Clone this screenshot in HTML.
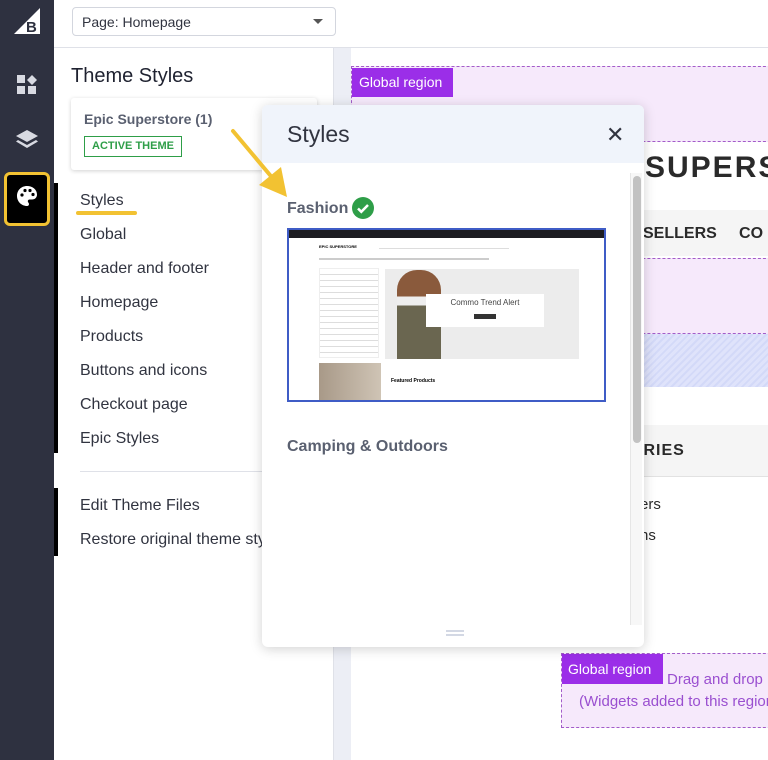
<!DOCTYPE html>
<html><head><meta charset="utf-8">
<style>
*{box-sizing:border-box;margin:0;padding:0}
body{width:768px;height:760px;overflow:hidden;position:relative;font-family:"Liberation Sans",sans-serif;background:#fff}
.a{position:absolute}
.side{left:0;top:0;width:54px;height:760px;background:#2e3140}
.menu div{position:absolute;left:80px;font-size:16px;color:#313440}
.cv{left:334px;top:48px;width:434px;height:712px;background:#eceef5}
.dash{border:1px dashed #a35cc9}
.gr{white-space:nowrap;background:#9b2ee8;color:#fff;font-size:14px}
</style></head><body>
<div class="a side"></div>
<svg class="a" style="left:14px;top:8px" width="26" height="26" viewBox="0 0 26 26"><polygon points="26,0 26,26 0,26" fill="#fff"/><text x="12" y="24" font-size="15" font-weight="bold" fill="#2e3140" font-family="Liberation Sans">B</text></svg>
<svg class="a" style="left:17px;top:75px" width="20" height="20" viewBox="0 0 20 20" fill="#d8dae2"><rect x="0" y="0" width="8" height="8"/><rect x="0" y="11" width="8" height="8"/><rect x="11" y="11" width="8" height="8"/><polygon points="15,0 20,5 15,10 10,5"/></svg>
<svg class="a" style="left:16px;top:130px" width="22" height="20" viewBox="0 0 22 20" fill="#d8dae2"><polygon points="11,0 22,6 11,12 0,6"/><polygon points="2,10 11,15 20,10 22,11.5 11,18 0,11.5"/></svg>
<div class="a" style="left:4px;top:172px;width:46px;height:54px;background:#000;border:3px solid #f2c232;border-radius:6px"></div>
<svg class="a" style="left:16px;top:185px" width="22" height="22" viewBox="0 0 22 22"><path d="M11 1C5 1 1 5.5 1 11s4.5 10 10 10c1.5 0 2-1 2-2 0-1.3-1.2-1.6-1.2-2.8 0-1 .8-1.7 1.8-1.7H16c3 0 5-2 5-5C21 4.5 16.5 1 11 1z" fill="#fff"/><circle cx="6" cy="10" r="1.6" fill="#000"/><circle cx="9" cy="5.5" r="1.6" fill="#000"/><circle cx="14" cy="5.5" r="1.6" fill="#000"/><circle cx="17" cy="9.5" r="1.6" fill="#000"/></svg>
<div class="a" style="left:54px;top:183px;width:4px;height:270px;background:#000"></div>
<div class="a" style="left:54px;top:488px;width:4px;height:68px;background:#000"></div>
<div class="a" style="left:54px;top:0;width:714px;height:48px;background:#fff;border-bottom:1px solid #dfe1e8"></div>
<div class="a" style="left:72px;top:7px;width:264px;height:29px;border:1px solid #d3d6de;border-radius:4px;font-size:14px;color:#313440;padding:6px 9px">Page: Homepage</div>
<div class="a" style="left:313px;top:19px;width:0;height:0;border-left:5px solid transparent;border-right:5px solid transparent;border-top:5px solid #555"></div>
<div class="a cv"></div>
<div class="a" style="left:351px;top:48px;width:417px;height:712px;background:#fff"></div>
<div class="a dash" style="left:351px;top:66px;width:430px;height:76px;background:#f6e9fb"></div>
<div class="a gr" style="left:352px;top:68px;width:101px;height:29px;padding:6px 7px">Global region</div>
<div class="a" style="left:645px;top:151px;font-size:30px;font-weight:bold;color:#2a2a2a;letter-spacing:2px">SUPERS</div>
<div class="a" style="left:351px;top:210px;width:417px;height:46px;background:#f5f5f5"></div>
<div class="a" style="left:643px;top:225px;font-size:16px;font-weight:bold;color:#2a2a2a;white-space:nowrap">SELLERS&nbsp;&nbsp;&nbsp;&nbsp;&nbsp;CO</div>
<div class="a dash" style="left:351px;top:258px;width:430px;height:76px;background:#f6e9fb"></div>
<div class="a" style="left:351px;top:334px;width:417px;height:53px;background:repeating-linear-gradient(135deg,#dfe3fb 0 3px,#d3d9f8 3px 5px)"></div>
<div class="a" style="left:351px;top:425px;width:417px;height:52px;background:#f5f5f5;border-bottom:1px solid #e2e2e2"></div>
<div class="a" style="left:630px;top:442px;font-size:16px;font-weight:bold;color:#2a2a2a;letter-spacing:1px">ORIES</div>
<div class="a" style="left:640px;top:496px;font-size:15px;color:#2a2a2a">ers</div>
<div class="a" style="left:640px;top:527px;font-size:15px;color:#2a2a2a">ns</div>
<div class="a dash" style="left:561px;top:653px;width:220px;height:75px;background:#f6e9fb"></div>
<div class="a gr" style="left:562px;top:654px;width:101px;height:30px;padding:7px 6px">Global region</div>
<div class="a" style="left:667px;top:671px;font-size:15px;color:#9a4fd0;white-space:nowrap">Drag and drop</div>
<div class="a" style="left:579px;top:693px;font-size:15px;color:#9a4fd0;white-space:nowrap">(Widgets added to this region</div>
<div class="a" style="left:333px;top:48px;width:1px;height:712px;background:#dfe1e8"></div>
<div class="a" style="left:71px;top:65px;font-size:20px;color:#1f2230">Theme Styles</div>
<div class="a" style="left:71px;top:98px;width:246px;height:72px;background:#fff;border-radius:3px;box-shadow:0 1px 4px rgba(0,0,0,.18)"></div>
<div class="a" style="left:84px;top:111px;font-size:14px;font-weight:bold;color:#5a6070">Epic Superstore (1)</div>
<div class="a" style="left:84px;top:136px;width:98px;height:21px;border:1px solid #2e9e48;color:#2e9e48;font-size:11px;font-weight:bold;text-align:center;line-height:19px;white-space:nowrap">ACTIVE THEME</div>
<div class="menu">
<div style="top:192px">Styles</div><div style="top:226px">Global</div><div style="top:260px">Header and footer</div><div style="top:294px">Homepage</div><div style="top:328px">Products</div><div style="top:362px">Buttons and icons</div><div style="top:396px">Checkout page</div><div style="top:430px">Epic Styles</div><div style="top:497px">Edit Theme Files</div><div style="top:531px;white-space:nowrap">Restore original theme styles</div>
</div>
<div class="a" style="left:80px;top:471px;width:190px;height:1px;background:#dfe1e8"></div>
<div class="a" style="left:76px;top:211px;width:61px;height:4px;background:#f2c232;border-radius:2px"></div>
<div class="a" style="left:262px;top:105px;width:382px;height:542px;background:#fff;border-radius:6px;box-shadow:0 2px 12px rgba(0,0,0,.18);overflow:hidden">
 <div class="a" style="left:0;top:0;width:382px;height:58px;background:#f0f4fb"></div>
 <div class="a" style="left:25px;top:16px;font-size:23px;color:#313440">Styles</div>
 <div class="a" style="left:344px;top:17px;font-size:22px;color:#313440">✕</div>
 <div class="a" style="left:368px;top:68px;width:12px;height:452px;background:#f7f7f7;border-left:1px solid #e6e6e6"></div>
 <div class="a" style="left:371px;top:71px;width:8px;height:267px;background:#c2c2c2;border-radius:4px"></div>
 <div class="a" style="left:25px;top:95px;font-size:16px;font-weight:bold;color:#5a6070">Fashion</div>
 <svg class="a" style="left:90px;top:92px" width="22" height="22" viewBox="0 0 22 22"><circle cx="11" cy="11" r="11" fill="#2e9e48"/><path d="M6 11.5l3.3 3.3L16 8" stroke="#fff" stroke-width="2.5" fill="none"/></svg>
 <div class="a" style="left:25px;top:123px;width:319px;height:174px;border:2px solid #3f5cc6;background:#fff;overflow:hidden">
  <div class="a" style="left:0;top:0;width:315px;height:8px;background:#1d1d22"></div>
  <div class="a" style="left:30px;top:14px;font-size:4px;font-weight:bold">EPIC SUPERSTORE</div>
  <div class="a" style="left:90px;top:14px;width:130px;height:5px;border-bottom:1px solid #ddd"></div>
  <div class="a" style="left:30px;top:28px;width:170px;height:2px;background:#ccc"></div>
  <div class="a" style="left:30px;top:38px;width:60px;height:90px;border:1px solid #eee;background:repeating-linear-gradient(#fff 0 5px,#ddd 5px 6px)"></div>
  <div class="a" style="left:96px;top:39px;width:194px;height:90px;background:#ececec"></div>
  <div class="a" style="left:108px;top:40px;width:44px;height:89px;background:linear-gradient(#8a5a3c 0 30%,#eee 30% 40%,#6a6650 40%);border-radius:20px 20px 0 0"></div>
  <div class="a" style="left:137px;top:64px;width:118px;height:33px;background:#fff;font-size:8px;color:#444;text-align:center;padding-top:4px">Commo Trend Alert<div style="width:22px;height:5px;background:#333;margin:7px auto 0"></div></div>
  <div class="a" style="left:30px;top:133px;width:62px;height:40px;background:linear-gradient(90deg,#a89988,#cfc4b5)"></div>
  <div class="a" style="left:102px;top:148px;font-size:5px;font-weight:bold">Featured Products</div>
 </div>
 <div class="a" style="left:25px;top:333px;font-size:16px;font-weight:bold;color:#5a6070">Camping &amp; Outdoors</div>
 <div class="a" style="left:184px;top:525px;width:18px;height:2px;background:#d3d8e4"></div>
 <div class="a" style="left:184px;top:529px;width:18px;height:2px;background:#d3d8e4"></div>
</div>
<svg class="a" style="left:225px;top:125px" width="70" height="75" viewBox="0 0 70 75"><line x1="8" y1="6" x2="50" y2="56" stroke="#f2c232" stroke-width="4" stroke-linecap="round"/><polygon points="62,72 34,60 56,42" fill="#f2c232"/></svg>
</body></html>
